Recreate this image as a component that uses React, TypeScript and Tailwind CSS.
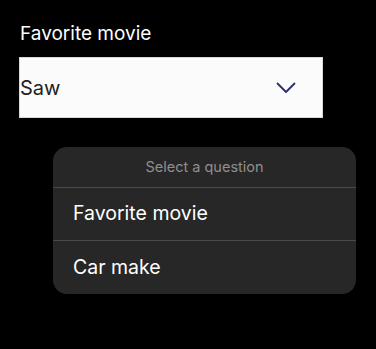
export default function App() {
  return (
    <div className="w-[376px] h-[349px] bg-black font-['Inter','Liberation_Sans',sans-serif] overflow-hidden">
      <div className="pt-[22px] pl-[19px]">
        <div className="text-white text-[19px] leading-[24px] pl-[1px]">Favorite movie</div>
        <div className="mt-[11px] w-[304px] h-[61px] bg-[#fbfbfb] border border-[#d8d8d8] flex items-center justify-between pr-[26px]">
          <span className="text-[#222] text-[20px] leading-none">Saw</span>
          <svg width="20" height="12" viewBox="0 0 20 12" fill="none">
            <path d="M1.5 1.5L10 10L18.5 1.5" stroke="#2a2f6b" strokeWidth="1.8" strokeLinecap="round" strokeLinejoin="round" />
          </svg>
        </div>
      </div>
      <div className="mt-[29px] ml-[53px] w-[303px] rounded-[14px] bg-[#272727] overflow-hidden">
        <div className="h-[41px] flex items-center justify-center text-[#8f8f8f] text-[14.5px] border-b border-[#4a4a4a]">
          Select a question
        </div>
        <div className="h-[53px] flex items-center pl-[20px] text-white text-[19.5px] border-b border-[#4a4a4a]">
          Favorite movie
        </div>
        <div className="h-[53px] flex items-center pl-[20px] text-white text-[19.5px]">
          Car make
        </div>
      </div>
    </div>
  );
}
